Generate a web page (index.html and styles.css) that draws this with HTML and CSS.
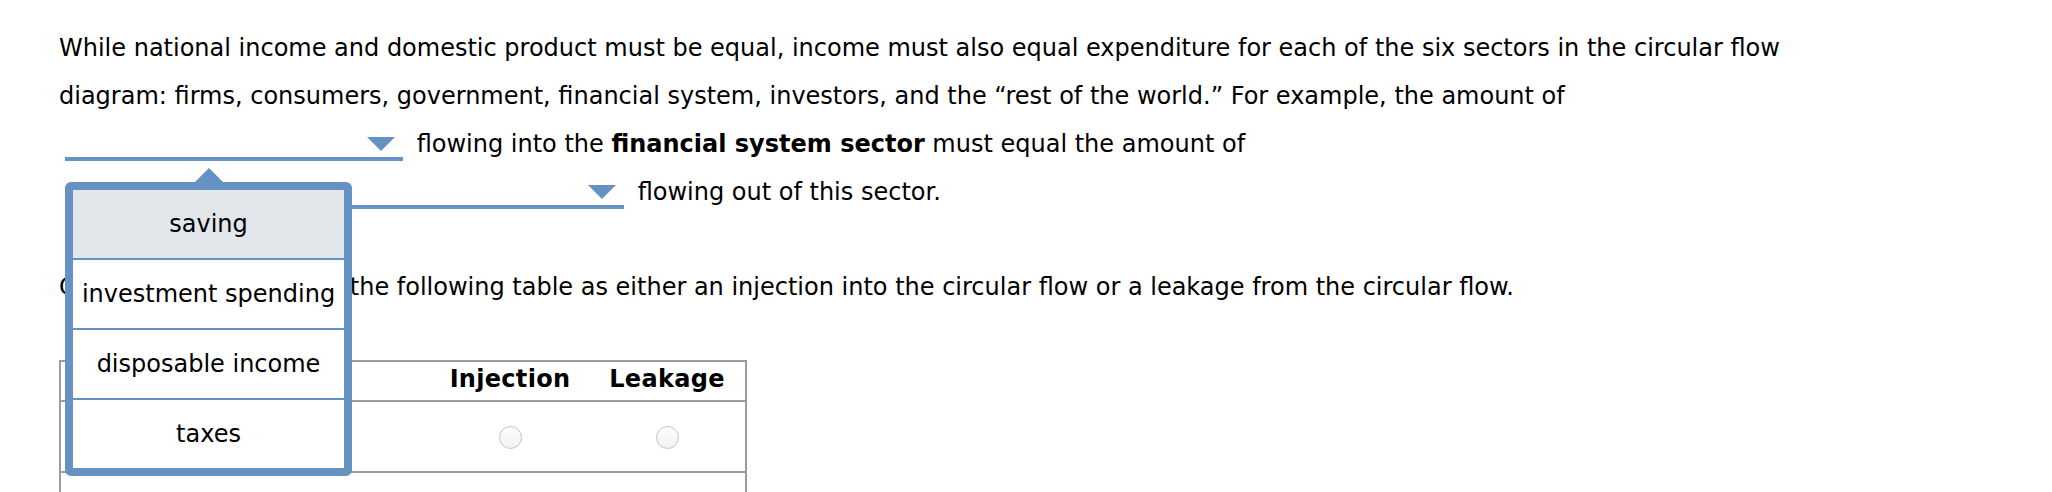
FILE: index.html
```html
<!DOCTYPE html>
<html lang="en">
<head>
<meta charset="utf-8">
<title>Circular flow</title>
<link rel="stylesheet" href="styles.css">
</head>
<body>
<div class="question">
  <p class="text">While national income and domestic product must be equal, income must also equal expenditure for each of the six sectors in the circular flow<br>diagram: firms, consumers, government, financial system, investors, and the “rest of the world.” For example, the amount of<br><span class="dropdown dd1"><span class="caret"></span></span> flowing into the <b>financial system sector</b> must equal the amount of<br><span class="dropdown dd2"><span class="caret"></span></span> flowing out of this sector.</p>

  <div class="popup">
    <div class="popup-arrow"></div>
    <ul class="options">
      <li class="option selected">saving</li>
      <li class="option">investment spending</li>
      <li class="option">disposable income</li>
      <li class="option">taxes</li>
    </ul>
  </div>

  <p class="text text2">Classify each activity in the following table as either an injection into the circular flow or a leakage from the circular flow.</p>

  <table class="grid">
    <thead>
      <tr><th class="c1"></th><th class="c2">Injection</th><th class="c3">Leakage</th></tr>
    </thead>
    <tbody>
      <tr><td class="c1"></td><td class="c2"><input type="radio" name="r1" class="radio"></td><td class="c3"><input type="radio" name="r1" class="radio"></td></tr>
      <tr><td class="c1"></td><td class="c2"><input type="radio" name="r2" class="radio"></td><td class="c3"><input type="radio" name="r2" class="radio"></td></tr>
    </tbody>
  </table>
</div>
</body>
</html>
```
FILE: styles.css
```css
html, body {
  margin: 0;
  padding: 0;
  background: #fff;
  overflow: hidden;
}
body {
  font-family: "DejaVu Sans", Verdana, sans-serif;
  font-size: 24px;
  color: #000;
}
.question {
  position: relative;
  padding: 24px 0 0 59px;
  width: 1900px;
}
.text {
  margin: 0 0 47px 0;
  line-height: 48px;
  white-space: nowrap;
}
.text2 {
  margin-bottom: 49px;
}
.text b {
  font-weight: bold;
}
.dropdown {
  display: inline-flex;
  justify-content: flex-end;
  align-items: flex-end;
  box-sizing: border-box;
  height: 30px;
  padding: 0 8px 6px 0;
  border-bottom: 4px solid #6592c2;
  vertical-align: 1px;
  margin-left: 6px;
  margin-right: 6px;
}
.dd1 { width: 338px; }
.dd2 { width: 559px; }
.caret {
  width: 0;
  height: 0;
  border-left: 14px solid transparent;
  border-right: 14px solid transparent;
  border-top: 14px solid #6592c2;
}
.popup {
  position: absolute;
  left: 65px;
  top: 182px;
  width: 287px;
  box-sizing: border-box;
  border: 8px solid #6592c2;
  border-radius: 6px;
  background: #fff;
  z-index: 5;
}
.popup-arrow {
  position: absolute;
  left: 50%;
  top: -22px;
  margin-left: -14px;
  width: 0;
  height: 0;
  border-left: 14px solid transparent;
  border-right: 14px solid transparent;
  border-bottom: 14px solid #6592c2;
}
.options {
  list-style: none;
  margin: 0;
  padding: 0;
  display: flex;
  flex-direction: column;
}
.option {
  height: 68px;
  display: flex;
  align-items: center;
  justify-content: center;
  border-top: 2px solid #6592c2;
  white-space: nowrap;
}
.option:first-child {
  border-top: none;
}
.option.selected {
  background: #e0e6e9;
}
.grid {
  border-collapse: collapse;
  border: 2px solid #9b9b9b;
}
.grid th, .grid td {
  border-top: 2px solid #9b9b9b;
  border-bottom: 2px solid #9b9b9b;
  padding: 0;
  text-align: center;
}
.grid th {
  height: 40px;
  box-sizing: border-box;
  padding-bottom: 4px;
  font-weight: bold;
  font-size: 24px;
  letter-spacing: 0.3px;
  vertical-align: middle;
}
.grid td {
  height: 69px;
  vertical-align: middle;
}
.grid .c1 { width: 370px; }
.grid .c2 { width: 158px; }
.grid .c3 { width: 156px; }
.radio {
  appearance: none;
  -webkit-appearance: none;
  margin: 0;
  width: 23px;
  height: 23px;
  border-radius: 50%;
  border: 1px solid #c4c4c4;
  background: linear-gradient(#ffffff, #f1f1f1);
  box-sizing: border-box;
  vertical-align: middle;
}
```
